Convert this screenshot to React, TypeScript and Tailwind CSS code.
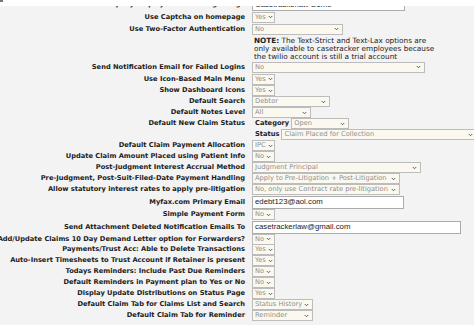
import React from "react";

const labelFont = "font-['DejaVu_Sans',Verdana,sans-serif] font-bold text-[6.7px] text-[#1c1c1c] leading-none";
const ctrlFont = "font-['DejaVu_Sans',Verdana,sans-serif] text-[6.7px] leading-none";

function Chevron() {
  return (
    <svg width="5" height="4" viewBox="0 0 10 7" className="shrink-0">
      <polyline points="1.5,1.5 5,5 8.5,1.5" fill="none" stroke="#556070" strokeWidth="2" />
    </svg>
  );
}

function Select({ value, w }: { value: string; w: string }) {
  return (
    <div className={`${w} h-[11px] shrink-0 flex items-center justify-between gap-[2px] pl-[2px] pr-[3px] border border-[#bcbcbc] bg-[#fbf9ef] overflow-hidden`}>
      <span className={`${ctrlFont} text-[#8e8e8e] whitespace-nowrap`}>{value}</span>
      <Chevron />
    </div>
  );
}

function TextInput({ value, w }: { value: string; w: string }) {
  return (
    <div className={`${w} h-[13px] shrink-0 flex items-center px-[2px] bg-white border border-[#ababab] font-['Liberation_Sans',Arial,sans-serif] text-[7.8px] text-[#222] whitespace-nowrap overflow-hidden`}>
      {value}
    </div>
  );
}

function Row({ label, h = "h-[11px]", top = false, children }: { label?: string; h?: string; top?: boolean; children?: React.ReactNode }) {
  return (
    <div className={`flex ${top ? "items-start" : "items-center"} ${h}`}>
      <div className="w-[245px] shrink-0 flex justify-end whitespace-nowrap">
        <span className={labelFont}>{label}</span>
      </div>
      <div className="pl-[7px] flex items-center">{children}</div>
    </div>
  );
}

export default function App() {
  return (
    <div className="relative w-[474px] h-[325px] overflow-hidden bg-[#f3f3f3]">
      {/* fixed header strip lying over the scrolled form */}
      <div className="absolute top-0 left-0 right-0 h-[6px] bg-white z-10">
        <div className="w-[3px] h-[2px] bg-[#777]" />
      </div>

      <div className="-mt-[2px] flex flex-col">
        <Row label="Company Display Name for Login Page" h="h-[13px]">
          <TextInput value="Casetrackerlaw Demo" w="w-[153px]" />
        </Row>
        <Row label="Use Captcha on homepage" h="h-[12px]">
          <Select value="Yes" w="w-[23px]" />
        </Row>
        <Row label="Use Two-Factor Authentication" h="h-[12px]">
          <Select value="No" w="w-[91px]" />
        </Row>
        <Row h="h-[26px]" top>
          <p className="font-['DejaVu_Sans',Verdana,sans-serif] text-[7.3px] leading-[8.3px] text-[#222] pl-[2px] pt-[1.5px] whitespace-nowrap">
            <b>NOTE:</b> The Text-Strict and Text-Lax options are
            <br />
            only available to casetracker employees because
            <br />
            the twilio account is still a trial account
          </p>
        </Row>
        <Row label="Send Notification Email for Failed Logins" h="h-[12px]">
          <Select value="No" w="w-[173px]" />
        </Row>
        <Row label="Use Icon-Based Main Menu" h="h-[12px]">
          <Select value="Yes" w="w-[23px]" />
        </Row>
        <Row label="Show Dashboard Icons">
          <Select value="Yes" w="w-[23px]" />
        </Row>
        <Row label="Default Search">
          <Select value="Debtor" w="w-[78px]" />
        </Row>
        <Row label="Default Notes Level">
          <Select value="All" w="w-[59px]" />
        </Row>
        <Row label="Default New Claim Status">
          <div className="flex items-center gap-[2px] pl-[3px]">
            <span className={labelFont}>Category</span>
            <Select value="Open" w="w-[58px]" />
          </div>
        </Row>
        <Row>
          <div className="flex items-center gap-[2px] pl-[3px]">
            <span className={labelFont}>Status</span>
            <Select value="Claim Placed for Collection" w="w-[196px]" />
          </div>
        </Row>
        <Row label="Default Claim Payment Allocation">
          <Select value="IPC" w="w-[23px]" />
        </Row>
        <Row label="Update Claim Amount Placed using Patient Info">
          <Select value="No" w="w-[23px]" />
        </Row>
        <Row label="Post-Judgment Interest Accrual Method">
          <Select value="Judgment Principal" w="w-[169px]" />
        </Row>
        <Row label="Pre-Judgment, Post-Suit-Filed-Date Payment Handling">
          <Select value="Apply to Pre-Litigation + Post-Litigation" w="w-[148px]" />
        </Row>
        <Row label="Allow statutory interest rates to apply pre-litigation">
          <Select value="No, only use Contract rate pre-litigation" w="w-[148px]" />
        </Row>
        <Row label="Myfax.com Primary Email" h="h-[14px]">
          <TextInput value="edebt123@aol.com" w="w-[152px]" />
        </Row>
        <Row label="Simple Payment Form">
          <Select value="No" w="w-[23px]" />
        </Row>
        <Row label="Send Attachment Deleted Notification Emails To" h="h-[14px]">
          <TextInput value="casetrackerlaw@gmail.com" w="w-[209px]" />
        </Row>
        <Row label="Add/Update Claims 10 Day Demand Letter option for Forwarders?" h="h-[10px]">
          <Select value="No" w="w-[23px]" />
        </Row>
        <Row label="Payments/Trust Acc: Able to Delete Transactions">
          <Select value="Yes" w="w-[23px]" />
        </Row>
        <Row label="Auto-Insert Timesheets to Trust Account if Retainer is present">
          <Select value="Yes" w="w-[23px]" />
        </Row>
        <Row label="Todays Reminders: Include Past Due Reminders">
          <Select value="No" w="w-[23px]" />
        </Row>
        <Row label="Default Reminders in Payment plan to Yes or No">
          <Select value="No" w="w-[23px]" />
        </Row>
        <Row label="Display Update Distributions on Status Page">
          <Select value="Yes" w="w-[23px]" />
        </Row>
        <Row label="Default Claim Tab for Claims List and Search">
          <Select value="Status History" w="w-[61px]" />
        </Row>
        <Row label="Default Claim Tab for Reminder">
          <Select value="Reminder" w="w-[61px]" />
        </Row>
      </div>
    </div>
  );
}
